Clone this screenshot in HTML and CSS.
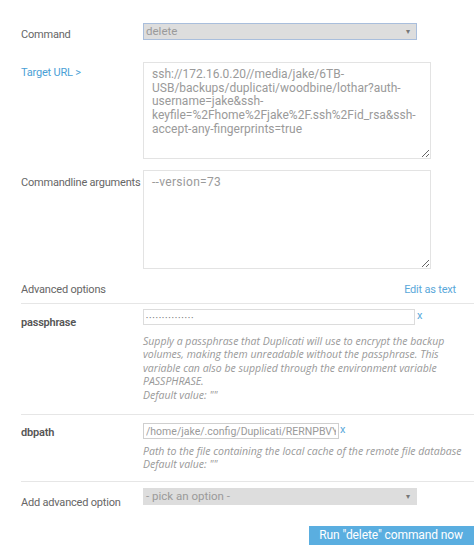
FILE: index.html
```html
<!DOCTYPE html>
<html>
<head>
<meta charset="utf-8">
<link rel="stylesheet" href="styles.css">
</head>
<body>
<div class="page">
  <div class="row row-command">
    <div class="label lbl-command">Command</div>
    <div class="select select-focus"><span>delete</span><span class="arrow">▾</span></div>
  </div>

  <div class="row row-target">
    <div class="label lbl-link lbl-target">Target URL &gt;</div>
    <textarea class="area area-target" spellcheck="false">ssh://172.16.0.20//media/jake/6TB-
USB/backups/duplicati/woodbine/lothar?auth-
username=jake&amp;ssh-
keyfile=%2Fhome%2Fjake%2F.ssh%2Fid_rsa&amp;ssh-
accept-any-fingerprints=true</textarea>
  </div>

  <div class="row row-args">
    <div class="label lbl-args">Commandline arguments</div>
    <textarea class="area area-args" spellcheck="false">--version=73</textarea>
  </div>

  <div class="adv-head">
    <span class="adv-title">Advanced options</span>
    <span class="link">Edit as text</span>
  </div>

  <div class="opt opt-pass">
    <div class="row">
      <div class="label opt-name name-pass">passphrase</div>
      <input class="text text-pass" type="password" value="xxxxxxxxxxxxxxx">
      <span class="remove remove-pass">x</span>
    </div>
    <div class="desc">Supply a passphrase that Duplicati will use to encrypt the backup volumes, making them unreadable without the passphrase. This variable can also be supplied through the environment variable PASSPHRASE.<br>Default value: ""</div>
  </div>

  <div class="opt opt-db">
    <div class="row">
      <div class="label opt-name name-db">dbpath</div>
      <input class="text text-db" type="text" value="/home/jake/.config/Duplicati/RERNPBVYPJ.sqlite">
      <span class="remove remove-db">x</span>
    </div>
    <div class="desc">Path to the file containing the local cache of the remote file database<br>Default value: ""</div>
  </div>

  <div class="row row-add">
    <div class="label lbl-add">Add advanced option</div>
    <div class="select select-plain"><span>- pick an option -</span><span class="arrow">▾</span></div>
  </div>

  <div class="actions">
    <button class="run">Run "delete" command now</button>
  </div>
</div>
</body>
</html>
```

FILE: styles.css
```css
html, body {
  margin: 0;
  padding: 0;
  background: #ffffff;
  overflow: hidden;
}

body {
  font-family: Roboto, "Liberation Sans", sans-serif;
  font-size: 11px;
  letter-spacing: -0.2px;
  color: #666666;
}

.page {
  padding-left: 21px;
}

.row {
  display: flex;
  align-items: flex-start;
}

.label {
  width: 122px;
  flex: none;
  line-height: 14px;
  white-space: nowrap;
  color: #666666;
}

.lbl-link {
  color: #4a9fd6;
}

.link {
  color: #5aa8da;
}

/* selects */
.select {
  width: 270px;
  height: 15px;
  background: #dddddd;
  border: 1px solid #dddddd;
  display: flex;
  justify-content: space-between;
  align-items: center;
  padding: 0 0 0 2px;
  color: #9a9a9a;
  font-size: 11.5px;
  letter-spacing: 0;
  line-height: 15px;
}

.select-focus {
  border-color: #a9bedc;
}

.arrow {
  font-size: 8px;
  color: #777777;
  margin-right: 6px;
}

/* row spacing */
.row-command {
  margin-top: 23px;
}

.lbl-command {
  padding-top: 5px;
}

.row-target {
  margin-top: 20px;
}

.lbl-target {
  padding-top: 4px;
}

.area {
  box-sizing: border-box;
  width: 288px;
  border: 1px solid #e3e3e3;
  border-radius: 0;
  padding: 5px 8px;
  margin: 0;
  font-family: Roboto, "Liberation Sans", sans-serif;
  font-size: 12px;
  letter-spacing: 0;
  line-height: 13.7px;
  color: #9a9a9a;
  resize: vertical;
  outline: none;
  white-space: pre;
  overflow: hidden;
}

.area-target {
  height: 97px;
}

.row-args {
  margin-top: 11px;
}

.lbl-args {
  padding-top: 6px;
}

.area-args {
  height: 99px;
  letter-spacing: 0.3px;
}

/* advanced */
.adv-head {
  margin-top: 14px;
  display: flex;
  justify-content: space-between;
  line-height: 14px;
  padding-right: 18px;
  padding-bottom: 6px;
  border-bottom: 1px solid #e6e6e6;
}

.opt {
  border-bottom: 1px solid #e6e6e6;
}

.opt-pass {
  padding-top: 5px;
  padding-bottom: 12px;
}

.opt-db {
  padding-top: 8px;
  padding-bottom: 9px;
}

.opt-name {
  font-weight: 600;
  color: #555555;
  padding-top: 7px;
}

.name-db {
  padding-top: 3px;
}

.text {
  box-sizing: border-box;
  height: 16px;
  border: 1px solid #dcdcdc;
  padding: 0 2px;
  margin: 0;
  font-family: Roboto, "Liberation Sans", sans-serif;
  font-size: 10.5px;
  letter-spacing: 0;
  color: #9a9a9a;
  outline: none;
  background: #ffffff;
}

.text-pass {
  width: 272px;
  font-size: 6px;
  letter-spacing: 1.2px;
  color: #777777;
}

.text-db {
  width: 196px;
  border-color: #cfcfcf;
}

.remove {
  color: #5aa8da;
  font-size: 11px;
  line-height: 14px;
  letter-spacing: 0;
}

.remove-pass {
  margin-left: 2px;
}

.remove-db {
  margin-left: 1px;
}

.desc {
  margin-left: 122px;
  margin-top: 5px;
  font-family: "Open Sans", sans-serif;
  font-style: italic;
  font-size: 10.5px;
  letter-spacing: 0;
  line-height: 13.4px;
  color: #999999;
}

.row-add {
  margin-top: 6px;
}

.lbl-add {
  padding-top: 8px;
}

.select-plain {
  border-color: #dddddd;
}

.actions {
  display: flex;
  justify-content: flex-end;
  margin-top: 16px;
}

.run {
  background: #5aaee0;
  color: #ffffff;
  border: none;
  border-radius: 0;
  height: 24px;
  padding: 0 11px 6px 10px;
  font-family: Roboto, "Liberation Sans", sans-serif;
  font-size: 12px;
  letter-spacing: -0.1px;
  line-height: 18px;
}
```
